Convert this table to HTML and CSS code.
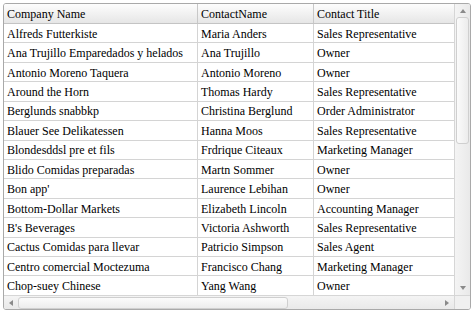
FILE: index.html
```html
<!DOCTYPE html>
<html>
<head>
<meta charset="utf-8">
<link rel="stylesheet" href="styles.css">
</head>
<body>
<div class="grid">
  <div class="view">
    <div class="table">
      <div class="row head">
        <div class="cell">Company Name</div>
        <div class="cell">ContactName</div>
        <div class="cell">Contact Title</div>
      </div>
      <div class="row"><div class="cell">Alfreds Futterkiste</div><div class="cell">Maria Anders</div><div class="cell">Sales Representative</div></div>
      <div class="row"><div class="cell">Ana Trujillo Emparedados y helados</div><div class="cell">Ana Trujillo</div><div class="cell">Owner</div></div>
      <div class="row"><div class="cell">Antonio Moreno Taquera</div><div class="cell">Antonio Moreno</div><div class="cell">Owner</div></div>
      <div class="row"><div class="cell">Around the Horn</div><div class="cell">Thomas Hardy</div><div class="cell">Sales Representative</div></div>
      <div class="row"><div class="cell">Berglunds snabbkp</div><div class="cell">Christina Berglund</div><div class="cell">Order Administrator</div></div>
      <div class="row"><div class="cell">Blauer See Delikatessen</div><div class="cell">Hanna Moos</div><div class="cell">Sales Representative</div></div>
      <div class="row"><div class="cell">Blondesddsl pre et fils</div><div class="cell">Frdrique Citeaux</div><div class="cell">Marketing Manager</div></div>
      <div class="row"><div class="cell">Blido Comidas preparadas</div><div class="cell">Martn Sommer</div><div class="cell">Owner</div></div>
      <div class="row"><div class="cell">Bon app'</div><div class="cell">Laurence Lebihan</div><div class="cell">Owner</div></div>
      <div class="row"><div class="cell">Bottom-Dollar Markets</div><div class="cell">Elizabeth Lincoln</div><div class="cell">Accounting Manager</div></div>
      <div class="row"><div class="cell">B's Beverages</div><div class="cell">Victoria Ashworth</div><div class="cell">Sales Representative</div></div>
      <div class="row"><div class="cell">Cactus Comidas para llevar</div><div class="cell">Patricio Simpson</div><div class="cell">Sales Agent</div></div>
      <div class="row"><div class="cell">Centro comercial Moctezuma</div><div class="cell">Francisco Chang</div><div class="cell">Marketing Manager</div></div>
      <div class="row"><div class="cell">Chop-suey Chinese</div><div class="cell">Yang Wang</div><div class="cell">Owner</div></div>
    </div>
  </div>
  <div class="vscroll">
    <div class="arrow up"></div>
    <div class="vtrack"><div class="vthumb"></div></div>
    <div class="arrow down"></div>
  </div>
  <div class="hscroll">
    <div class="arrow left"></div>
    <div class="htrack"><div class="hthumb"></div></div>
    <div class="arrow right"></div>
  </div>
  <div class="corner"></div>
</div>
</body>
</html>
```

FILE: styles.css
```css
html, body {
  margin: 0;
  padding: 0;
  background: #ffffff;
}
body {
  padding: 3px;
  font-family: "Liberation Serif", "Times New Roman", serif;
  font-size: 12px;
  color: #000;
}
.grid {
  width: 466px;
  height: 305px;
  border: 1px solid #a9a9a9;
  border-radius: 3px;
  display: grid;
  grid-template-columns: 450px 16px;
  grid-template-rows: 291px 14px;
  overflow: hidden;
}
.view {
  overflow: hidden;
}
.table {
  width: 520px;
}
.row {
  display: grid;
  grid-template-columns: 194px 116px 210px;
  height: 19.43px;
  box-sizing: border-box;
  border-bottom: 1px solid #d4d4d4;
}
.row.head {
  height: 20px;
  background: linear-gradient(#fdfdfd, #e6e6e6);
  border-bottom: 1px solid #c4c4c4;
}
.cell {
  border-right: 1px solid #d4d4d4;
  padding-left: 3px;
  padding-top: 2px;
  display: flex;
  align-items: center;
  white-space: nowrap;
  overflow: hidden;
}
.head .cell {
  border-right-color: #c8c8c8;
}
.vscroll {
  border-left: 1px solid #d6d6d6;
  background: linear-gradient(90deg, #f4f4f4, #e9e9e9);
  display: flex;
  flex-direction: column;
  align-items: center;
}
.vtrack {
  flex: 1;
  width: 100%;
}
.vthumb {
  margin: 0 auto;
  width: 13px;
  height: 127px;
  box-sizing: border-box;
  border: 1px solid #cfcfcf;
  border-radius: 3px;
  background: linear-gradient(90deg, #fbfbfb, #ececec);
}
.hscroll {
  border-top: 1px solid #d6d6d6;
  background: linear-gradient(#f4f4f4, #e9e9e9);
  display: flex;
  align-items: center;
}
.htrack {
  flex: 1;
  height: 100%;
  display: flex;
  align-items: center;
}
.hthumb {
  width: 270px;
  height: 12px;
  box-sizing: border-box;
  border: 1px solid #cfcfcf;
  border-radius: 3px;
  background: linear-gradient(#fbfbfb, #ececec);
}
.corner {
  background: #f0f0f0;
  border-left: 1px solid #d6d6d6;
  border-top: 1px solid #d6d6d6;
}
.arrow {
  flex: none;
  width: 0;
  height: 0;
  border-style: solid;
  border-color: transparent;
}
.arrow.up {
  margin: 5px 0 4px;
  border-width: 0 3px 4px 3px;
  border-bottom-color: #8a8a8a;
}
.arrow.down {
  margin: 4px 0 5px;
  border-width: 4px 3px 0 3px;
  border-top-color: #8a8a8a;
}
.arrow.left {
  margin: 0 5px 0 5px;
  border-width: 3px 4px 3px 0;
  border-right-color: #8a8a8a;
}
.arrow.right {
  margin: 0 5px 0 5px;
  border-width: 3px 0 3px 4px;
  border-left-color: #8a8a8a;
}
```
